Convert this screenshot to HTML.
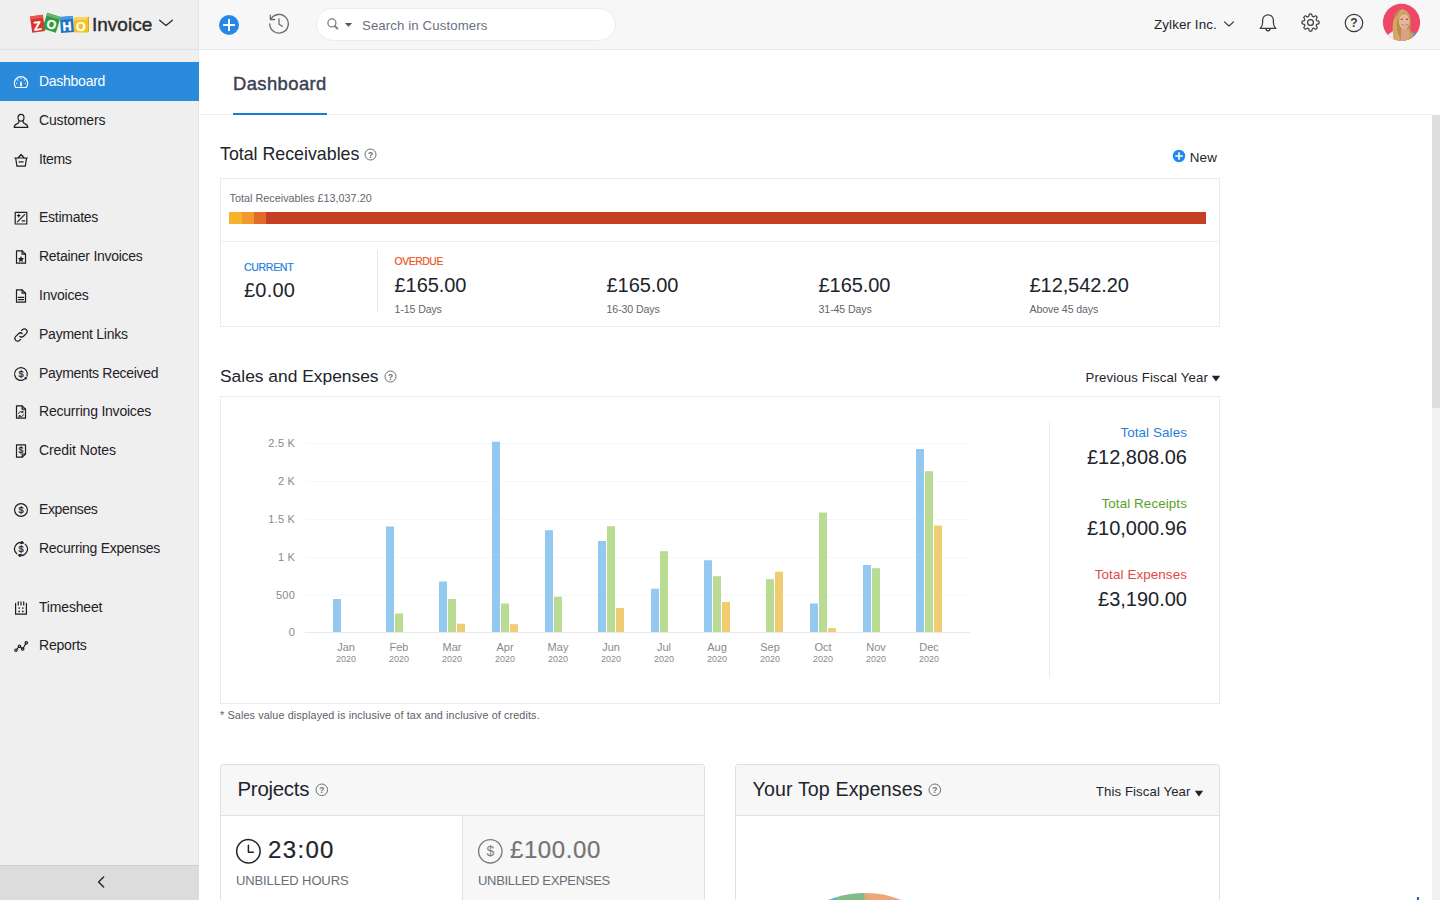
<!DOCTYPE html>
<html lang="en">
<head>
<meta charset="utf-8">
<title>Dashboard | Zoho Invoice</title>
<style>
*{box-sizing:border-box;margin:0;padding:0}
html,body{width:1440px;height:900px;overflow:hidden;background:#fff}
body{font-family:"Liberation Sans",sans-serif;color:#21263c;position:relative;font-size:14px}
.abs{position:absolute}
.t{position:absolute;white-space:nowrap;line-height:1}
/* ---------- sidebar ---------- */
#side{position:absolute;left:0;top:0;width:199px;height:900px;background:#efefef}
#side .hd{position:absolute;left:0;top:0;width:199px;height:50px;border-bottom:1px solid #e2e2e2}
#side .ft{position:absolute;left:0;top:865px;width:199px;height:35px;background:#dcdcdc;border-top:1px solid #cfcfcf}
.nav{position:absolute;left:0;width:199px;height:39px}
.nav.on{background:#2a8adb}
.nav span{position:absolute;left:39px;top:11px;font-size:14px;line-height:16px;color:#1f2227;white-space:nowrap;letter-spacing:-.27px}
.nav.on span{color:#fff}
.nav svg{position:absolute;left:13px;top:11.9px;width:16px;height:16px;fill:none;stroke:#1c1e22;stroke-width:1.2;stroke-linecap:round;stroke-linejoin:round}
.nav.on svg{stroke:#fff}
/* ---------- topbar ---------- */
#top{position:absolute;left:199px;top:0;width:1241px;height:50px;background:#f7f7f7;border-bottom:1px solid #e6e6e6}
#side{border-right:1px solid #e4e4e4}
/* ---------- main ---------- */
#main{position:absolute;left:200px;top:50px;width:1240px;height:850px;background:#fff;overflow:hidden}
.card{position:absolute;border:1px solid #ebebeb;background:#fff}
.h2{font-size:17.6px;color:#21242c}
.grey{color:#6b6f78}
</style>
</head>
<body>
<!-- SIDEBAR -->
<div id="side">
  <div class="hd">
    <svg class="abs" style="left:28px;top:10.300px" width="64" height="26" viewBox="0 0 64 26">
      <g transform="rotate(-8 9.5 13.5)"><rect x="3" y="5.5" width="13" height="16.5" fill="#d8362c"/><rect x="3" y="5.5" width="13" height="3" fill="#e6574e"/></g>
      <g transform="rotate(17 23.5 13)"><rect x="16.5" y="4.5" width="14" height="16.5" fill="#2f9a41"/><rect x="16.5" y="4.5" width="14" height="3" fill="#63b76f"/></g>
      <g transform="rotate(-4 39 14.5)"><rect x="32.5" y="6.5" width="13" height="16" fill="#1f73c4"/><rect x="32.5" y="6.5" width="13" height="3" fill="#4d97dc"/></g>
      <g><rect x="46" y="7.5" width="13.5" height="15" fill="#f8c21c"/><rect x="46" y="7.5" width="13.5" height="2.6" fill="#fbd455"/><polygon points="59.5,7.5 61,6.5 61,21.5 59.5,22.5" fill="#e0a610"/></g>
      <g font-family="Liberation Sans, sans-serif" font-weight="700" font-size="12.600" fill="#fff" text-anchor="middle" stroke="#fff" stroke-width=".25">
        <text x="9.400" y="20.300" transform="rotate(-8 9.400 15)">Z</text>
        <text x="23.600" y="18.800" transform="rotate(17 23.600 14)">O</text>
        <text x="39" y="20.700" transform="rotate(-4 39 16)">H</text>
        <text x="52.800" y="20.900">O</text>
      </g>
    </svg>
    <div class="t" style="left:92px;top:14.9px;font-size:19px;color:#2b2b2b;-webkit-text-stroke:.4px #2b2b2b;letter-spacing:0">Invoice</div>
    <svg class="abs" style="left:158px;top:17px" width="16" height="10" viewBox="0 0 16 10"><path d="M1.600 3.200 L8 8.400 L14.400 3.200" fill="none" stroke="#2b2b2b" stroke-width="1.300" stroke-linecap="round" stroke-linejoin="round"/></svg>
  </div>
  <div class="nav on" style="top:62px"><svg viewBox="0 0 16 16"><path d="M2.700 13.500A6.700 6.700 0 1 1 13.300 13.500Z"/><path d="M8 8.300v3.400" stroke-width="1.700"/><path d="M8 4.600v.01M4.700 6v.01M11.300 6v.01M3.500 9.300v.01M12.500 9.300v.01" stroke-width="1.300"/></svg><span style="letter-spacing:-0.27px">Dashboard</span></div>
  <div class="nav" style="top:101px"><svg viewBox="0 0 16 16"><ellipse cx="8" cy="4.700" rx="3" ry="3.400"/><path d="M5.900 7.500v1.200c0 1-.6 1.500-1.600 1.900-1.900.7-3 1.400-3.100 3.700h13.600c-.1-2.300-1.200-3-3.100-3.700-1-.4-1.600-.9-1.600-1.900V7.500"/></svg><span style="letter-spacing:-0.15px">Customers</span></div>
  <div class="nav" style="top:140px"><svg viewBox="0 0 16 16"><path d="M1.800 6h12.600M2.700 6l1.200 8.100h8.400L13.500 6M5 6l3.100-3.500L11.200 6M6.100 9.900h4"/></svg><span style="letter-spacing:-0.34px">Items</span></div>
  <div class="nav" style="top:198px"><svg viewBox="0 0 16 16"><rect x="2.200" y="2.400" width="11.600" height="11.600"/><path d="M4.400 11.800l7.200-7.200M4.400 5.600h2.600M5.700 4.300v2.600M9.200 10.800h2.600"/></svg><span style="letter-spacing:-0.27px">Estimates</span></div>
  <div class="nav" style="top:237px"><svg viewBox="0 0 16 16"><path d="M3.500 1.800h5.600l3.400 3.400v9H3.500z"/><path d="M9.100 1.800v3.400h3.400"/><path d="M8 6.900l1 2 2.200.3-1.600 1.500.4 2.200L8 11.900l-2 1 .4-2.200-1.600-1.500L7 8.900z" fill="#22252b" stroke="none"/></svg><span style="letter-spacing:-0.27px">Retainer Invoices</span></div>
  <div class="nav" style="top:276px"><svg viewBox="0 0 16 16"><path d="M3.500 1.800h5.600l3.400 3.400v9H3.500z"/><path d="M9.100 1.800v3.400h3.400M5.400 9.400h5.200M5.400 11.600h5.200"/></svg><span style="letter-spacing:-0.23px">Invoices</span></div>
  <div class="nav" style="top:315px"><svg viewBox="0 0 16 16"><path d="M6.700 9.300a2.700 2.700 0 0 0 3.800 0l3-3a2.700 2.700 0 0 0-3.800-3.800l-1.200 1.200"/><path d="M9.300 6.700a2.700 2.700 0 0 0-3.800 0l-3 3a2.700 2.700 0 0 0 3.800 3.800l1.200-1.200"/></svg><span style="letter-spacing:-0.23px">Payment Links</span></div>
  <div class="nav" style="top:354px"><svg viewBox="0 0 16 16"><path d="M11.200 13.540A6.400 6.400 0 1 1 14 10.190"/><circle cx="12.700" cy="12.300" r="1.250" fill="#1c1e22" stroke="none"/><text x="8" y="11.1" font-size="9.2" font-family="Liberation Sans,sans-serif" text-anchor="middle" fill="#1c1e22" stroke="#1c1e22" stroke-width=".25">$</text></svg><span style="letter-spacing:-0.31px">Payments Received</span></div>
  <div class="nav" style="top:392px"><svg viewBox="0 0 16 16"><path d="M3.500 1.800h5.600l3.400 3.400v9H3.500z"/><path d="M9.100 1.800v3.400h3.400"/><path d="M5.600 9.600a2.500 2.500 0 0 1 4.300-1.300M10.400 10.600a2.500 2.500 0 0 1-4.300 1.300M10 6.900v1.500H8.500M6 13.300v-1.500h1.500" stroke-width=".9"/></svg><span style="letter-spacing:-0.22px">Recurring Invoices</span></div>
  <div class="nav" style="top:431px"><svg viewBox="0 0 16 16"><path d="M3.500 1.800h9v9.200l-3.200 3.200H3.500z"/><path d="M12.500 11h-3.200v3.200"/><text x="8" y="10.4" font-size="8.6" font-family="Liberation Sans,sans-serif" text-anchor="middle" fill="#1c1e22" stroke="#1c1e22" stroke-width=".25">$</text></svg><span style="letter-spacing:-0.08px">Credit Notes</span></div>
  <div class="nav" style="top:490px"><svg viewBox="0 0 16 16"><circle cx="8" cy="8" r="6.400"/><text x="8" y="11.1" font-size="9.2" font-family="Liberation Sans,sans-serif" text-anchor="middle" fill="#1c1e22" stroke="#1c1e22" stroke-width=".25">$</text></svg><span style="letter-spacing:-0.38px">Expenses</span></div>
  <div class="nav" style="top:529px"><svg viewBox="0 0 16 16"><path d="M12.110 3.100A6.400 6.400 0 0 1 5.810 14.010M3.890 12.900A6.400 6.400 0 0 1 10.190 1.990"/><path d="M8.810 .2L10.190 1.990L7.870 2.610M7.190 15.800L5.810 14.010L8.130 13.390"/><text x="8" y="11.1" font-size="9.2" font-family="Liberation Sans,sans-serif" text-anchor="middle" fill="#1c1e22" stroke="#1c1e22" stroke-width=".25">$</text></svg><span style="letter-spacing:-0.29px">Recurring Expenses</span></div>
  <div class="nav" style="top:588px"><svg viewBox="0 0 16 16"><path d="M2.600 3.400v10.800h10.800V3.400M5.300 1.800v3.200M10.700 1.800v3.200M8 1.800v3.200"/><path d="M6.200 8v.01M9.800 8v.01M6.200 11.400v.01M9.800 11.400v.01" stroke-width="1.700"/></svg><span style="letter-spacing:-0.17px">Timesheet</span></div>
  <div class="nav" style="top:626px"><svg viewBox="0 0 16 16"><circle cx="2.900" cy="12.200" r="1.200"/><circle cx="6.500" cy="8.200" r="1.200"/><circle cx="9.700" cy="11" r="1.200"/><circle cx="13.300" cy="4.800" r="1.200"/><path d="M3.700 11.300l2-2.200M7.400 9l1.400 1.200M10.300 10l2.400-4.200"/></svg><span style="letter-spacing:-0.20px">Reports</span></div>
  <div class="ft"><svg class="abs" style="left:94.600px;top:8px" width="12" height="16" viewBox="0 0 12 16"><path d="M8.600 3 L3.600 8 L8.600 13" fill="none" stroke="#2a2a2a" stroke-width="1.500" stroke-linecap="round" stroke-linejoin="round"/></svg></div>
</div>
<!-- TOPBAR -->
<div id="top">
  <!-- coordinates inside #top are page-x minus 199 -->
  <svg class="abs" style="left:19px;top:13.7px" width="22" height="22" viewBox="0 0 22 22"><circle cx="11" cy="11" r="10" fill="#2488e4"/><path d="M11 5.800v10.400M5.800 11h10.400" stroke="#fff" stroke-width="1.900" stroke-linecap="round"/></svg>
  <svg class="abs" style="left:68px;top:11.9px" width="24" height="24" viewBox="0 0 24 24" fill="none" stroke="#6a6a6a" stroke-width="1.300" stroke-linecap="round" stroke-linejoin="round"><path d="M3.900 7.200A9.300 9.300 0 1 1 2.700 12"/><path d="M3.300 3.200v4.300h4.300"/><path d="M12 6.800v5.400l3.400 2"/></svg>
  <div class="abs" style="left:117px;top:8px;width:300px;height:33px;border:1px solid #ececec;border-radius:17px;background:#fff"></div>
  <svg class="abs" style="left:127px;top:17px" width="14" height="14" viewBox="0 0 14 14" fill="none" stroke="#7b7b7b" stroke-width="1.250" stroke-linecap="round"><circle cx="5.900" cy="5.900" r="4"/><path d="M9 9.100l2.400 2.500" stroke-width="1.900"/></svg>
  <svg class="abs" style="left:145px;top:22px" width="9" height="6" viewBox="0 0 9 6"><path d="M.8 1h7.400L4.500 4.800z" fill="#555"/></svg>
  <div class="t" style="left:163px;top:18.700px;font-size:13.200px;color:#6a6f7f;letter-spacing:.12px">Search in Customers</div>
  <div class="t" style="left:955px;top:17.800px;font-size:13.400px;color:#22252c;letter-spacing:.1px">Zylker Inc.</div>
  <svg class="abs" style="left:1024px;top:20px" width="12" height="8" viewBox="0 0 12 8"><path d="M1.400 1.800L6 6l4.600-4.200" fill="none" stroke="#333" stroke-width="1.100" stroke-linecap="round" stroke-linejoin="round"/></svg>
  <!-- bell -->
  <svg class="abs" style="left:1058px;top:12px" width="22" height="22" viewBox="0 0 22 22" fill="none" stroke="#3a3a3a" stroke-width="1.250" stroke-linecap="round" stroke-linejoin="round"><path d="M3.200 16.300c1.700-1.300 2.400-2.900 2.400-5.600V8.200a5.400 5.400 0 0 1 10.800 0v2.500c0 2.700.7 4.300 2.400 5.600z"/><path d="M9 16.800a2 2 0 0 0 4 0"/></svg>
  <!-- gear -->
  <svg class="abs" style="left:1102.300px;top:13.400px" width="19" height="19" viewBox="0 0 24 24" fill="none" stroke="#3a3a3a" stroke-width="1.550" stroke-linecap="round" stroke-linejoin="round"><circle cx="12" cy="12" r="3.700"/><path d="M19.400 15a1.650 1.650 0 0 0 .33 1.820l.06.06a2 2 0 1 1-2.830 2.830l-.06-.06a1.650 1.650 0 0 0-1.820-.33 1.650 1.650 0 0 0-1 1.510V21a2 2 0 0 1-4 0v-.09A1.650 1.650 0 0 0 9 19.400a1.650 1.650 0 0 0-1.820.33l-.06.06a2 2 0 1 1-2.830-2.830l.06-.06a1.650 1.650 0 0 0 .33-1.820 1.650 1.650 0 0 0-1.510-1H3a2 2 0 0 1 0-4h.09A1.650 1.650 0 0 0 4.600 9a1.650 1.650 0 0 0-.33-1.820l-.06-.06a2 2 0 1 1 2.830-2.830l.06.06a1.650 1.650 0 0 0 1.820.33H9a1.650 1.650 0 0 0 1-1.510V3a2 2 0 0 1 4 0v.09a1.650 1.650 0 0 0 1 1.510 1.650 1.650 0 0 0 1.820-.33l.06-.06a2 2 0 1 1 2.830 2.830l-.06.06a1.650 1.650 0 0 0-.33 1.820V9a1.650 1.650 0 0 0 1.510 1H21a2 2 0 0 1 0 4h-.09a1.650 1.650 0 0 0-1.510 1z"/></svg>
  <!-- help -->
  <svg class="abs" style="left:1144px;top:12px" width="22" height="22" viewBox="0 0 22 22"><circle cx="11" cy="11" r="8.700" fill="none" stroke="#3a3a3a" stroke-width="1.200"/><text x="11" y="15.300" font-family="Liberation Sans,sans-serif" font-size="12" font-weight="700" fill="#3a3a3a" text-anchor="middle">?</text></svg>
  <!-- avatar -->
  <svg class="abs" style="left:1183px;top:3px" width="40" height="40" viewBox="0 0 40 40">
    <defs><clipPath id="av"><circle cx="19.500" cy="19.400" r="18.600"/></clipPath></defs>
    <circle cx="19.500" cy="19.400" r="18.600" fill="#ee4866"/>
    <g clip-path="url(#av)">
      <path d="M3 34L11.500 27.500L20 32L21 40L3 40Z" fill="#f5f0ed"/>
      <path d="M29.500 28.500L34.500 31L33.500 36L29 34.500Z" fill="#5e9fd6"/>
      <path d="M20 6.200C16 6.500 13.500 9.500 12.300 13.500C11 18 10.300 22 10.600 26C10.800 30 11.500 34 12.500 40L30 40C30.500 36.500 31.500 33.500 31 31.500C29.500 29.500 28.300 27.500 28.600 25C29.300 21 29.200 17 28 13.500C26.800 9.500 24 6.500 20 6.200Z" fill="#bf8b52"/>
      <path d="M19 26L27 26L28.500 40L19 40Z" fill="#d9a283"/>
      <ellipse cx="22.200" cy="18.600" rx="5.400" ry="7.800" fill="#e7b799"/>
      <path d="M20 6.200C17 8 15.500 11.500 15.800 16.800C17.500 13.500 19.500 10.800 22.500 9.300C24.500 10.200 26.500 12.500 27.600 15.800C28 11.500 25 7 20 6.200Z" fill="#d6a867"/>
      <path d="M16.300 12C14.500 18 14.200 25 15.500 29C16.500 32 18.500 35 19.500 40L12.500 40C11.500 34 10.500 28 11 22C11.300 18 13 13.500 16.300 12Z" fill="#d6a867"/>
      <path d="M27.800 24C27.500 27 28.500 29.500 30.500 31.500C31 33.500 30 36.500 29.500 40L25.500 40C27 36 27.500 31 26.500 27Z" fill="#cf9d5e"/>
      <path d="M18.700 16.300h2.100M23.900 16.300h2.100" stroke="#6a4630" stroke-width="1"/>
      <path d="M19.600 21.100C21.500 22.200 24 22.200 25.800 20.900C25.200 23.700 20.600 24 19.600 21.100Z" fill="#7a3b38"/>
      <path d="M20.300 21.500C21.800 22.100 23.800 22.100 25.200 21.400L24.900 22.300C23.500 22.900 21.800 22.900 20.600 22.300Z" fill="#fff"/>
    </g>
  </svg>
</div>
<!-- MAIN -->
<div id="main">
  <!-- coordinates inside #main: x = page-x - 200, y = page-y - 50 -->
  <div class="t" style="left:33px;top:25px;font-size:18.400px;color:#3b4252;-webkit-text-stroke:.45px #3b4252;letter-spacing:.42px">Dashboard</div>
  <div class="abs" style="left:0;top:64px;width:1232px;height:1px;background:#ececec"></div>
  <div class="abs" style="left:33px;top:63px;width:94px;height:2px;background:#1b7ad8"></div>
  <!-- scrollbar -->
  <div class="abs" style="left:1232px;top:65px;width:8px;height:785px;background:#f2f2f2"></div>
  <div class="abs" style="left:1232px;top:65px;width:8px;height:293px;background:#dfdfdf"></div>
  <div class="abs" style="left:1217px;top:847px;width:2px;height:3px;background:#1565c0"></div>
  <div class="t h2" style="left:20px;top:96px;font-size:17.800px">Total Receivables</div>
  <svg class="abs" style="left:163.5px;top:97.5px" width="13.0" height="13.0" viewBox="0 0 13.0 13.0"><circle cx="6.5" cy="6.5" r="5.5" fill="none" stroke="#6a6a6a" stroke-width="1"/><text x="6.5" y="9.500" font-family="Liberation Sans,sans-serif" font-size="8.400" font-weight="700" fill="#6a6a6a" text-anchor="middle">?</text></svg>
  <svg class="abs" style="left:971.700px;top:99px" width="14" height="14" viewBox="0 0 14 14"><circle cx="7" cy="7" r="6.200" fill="#1f87f0"/><path d="M7 3.800v6.400M3.800 7h6.400" stroke="#fff" stroke-width="1.600" stroke-linecap="round"/></svg>
  <div class="t" style="left:989.700px;top:100.500px;font-size:13.400px;color:#22252c;letter-spacing:.2px">New</div>
  <div class="card" style="left:20px;top:128px;width:1000px;height:149px"></div>
  <div class="t" style="left:29.500px;top:143px;font-size:10.800px;color:#63666e;letter-spacing:.02px">Total Receivables £13,037.20</div>
  <div class="abs" style="left:29px;top:162px;width:977px;height:12px;background:#c63f23"></div>
  <div class="abs" style="left:29px;top:162px;width:13px;height:12px;background:#f6b42c"></div>
  <div class="abs" style="left:42px;top:162px;width:12px;height:12px;background:#f2982c"></div>
  <div class="abs" style="left:54px;top:162px;width:12px;height:12px;background:#e26a2a"></div>
  <div class="abs" style="left:21px;top:191px;width:998px;height:1px;background:#ececec"></div>
  <div class="abs" style="left:177px;top:200px;width:1px;height:62px;background:#e6e6e6"></div>
  <div class="t" style="left:44px;top:212px;font-size:10.600px;letter-spacing:-.36px;color:#1f7fe0;-webkit-text-stroke:.2px #1f7fe0">CURRENT</div>
  <div class="t" style="left:44px;top:229.500px;font-size:20px;letter-spacing:.2px;color:#21242c">£0.00</div>
  <div class="t" style="left:194.500px;top:207.300px;font-size:10.400px;letter-spacing:-.42px;color:#e8581c;-webkit-text-stroke:.2px #e8581c">OVERDUE</div>
  <div class="t" style="left:194.6px;top:224.500px;font-size:20px;letter-spacing:-.1px;color:#21242c">£165.00</div>
  <div class="t" style="left:194.6px;top:254.300px;font-size:10.600px;color:#63666e;letter-spacing:-.12px">1-15 Days</div>
  <div class="t" style="left:406.6px;top:224.500px;font-size:20px;letter-spacing:-.1px;color:#21242c">£165.00</div>
  <div class="t" style="left:406.6px;top:254.300px;font-size:10.600px;color:#63666e;letter-spacing:-.12px">16-30 Days</div>
  <div class="t" style="left:618.6px;top:224.500px;font-size:20px;letter-spacing:-.1px;color:#21242c">£165.00</div>
  <div class="t" style="left:618.6px;top:254.300px;font-size:10.600px;color:#63666e;letter-spacing:-.12px">31-45 Days</div>
  <div class="t" style="left:829.6px;top:224.500px;font-size:20px;letter-spacing:-.1px;color:#21242c">£12,542.20</div>
  <div class="t" style="left:829.6px;top:254.300px;font-size:10.600px;color:#63666e;letter-spacing:-.12px">Above 45 days</div>
  <div class="t h2" style="left:20px;top:317.500px;font-size:17.400px">Sales and Expenses</div>
  <svg class="abs" style="left:184.0px;top:319.5px" width="13.0" height="13.0" viewBox="0 0 13.0 13.0"><circle cx="6.5" cy="6.5" r="5.5" fill="none" stroke="#6a6a6a" stroke-width="1"/><text x="6.5" y="9.500" font-family="Liberation Sans,sans-serif" font-size="8.400" font-weight="700" fill="#6a6a6a" text-anchor="middle">?</text></svg>
  <div class="t" style="right:232px;top:320.500px;font-size:13.200px;color:#22252c;letter-spacing:.15px">Previous Fiscal Year</div>
  <svg class="abs" style="left:1011px;top:325px" width="10" height="7" viewBox="0 0 10 7"><path d="M.8.800h8.400L5 6.400z" fill="#222"/></svg>
  <div class="card" style="left:20px;top:346px;width:1000px;height:308px"></div>
  <div class="abs" style="left:849px;top:372px;width:1px;height:256px;background:#ebebeb"></div>
  <svg class="abs" style="left:21px;top:347px" width="820" height="300" viewBox="0 0 820 300" font-family="Liberation Sans,sans-serif"><rect x="84" y="46.0" width="665.500" height="1" fill="#f7f7f7"/><text x="74" y="50.3" font-size="11" fill="#8a8a8a" text-anchor="end" letter-spacing=".2">2.5 K</text><rect x="84" y="84.0" width="665.500" height="1" fill="#f7f7f7"/><text x="74" y="88.3" font-size="11" fill="#8a8a8a" text-anchor="end" letter-spacing=".2">2 K</text><rect x="84" y="122.0" width="665.500" height="1" fill="#f7f7f7"/><text x="74" y="126.3" font-size="11" fill="#8a8a8a" text-anchor="end" letter-spacing=".2">1.5 K</text><rect x="84" y="160.0" width="665.500" height="1" fill="#f7f7f7"/><text x="74" y="164.3" font-size="11" fill="#8a8a8a" text-anchor="end" letter-spacing=".2">1 K</text><rect x="84" y="197.7" width="665.500" height="1" fill="#f7f7f7"/><text x="74" y="202.0" font-size="11" fill="#8a8a8a" text-anchor="end" letter-spacing=".2">500</text><rect x="84" y="235.0" width="665.500" height="1" fill="#e9e9e9"/><text x="74" y="239.3" font-size="11" fill="#8a8a8a" text-anchor="end" letter-spacing=".2">0</text><rect x="112" y="202.0" width="8" height="33.0" fill="#94c9ef"/><text x="125" y="253.600" font-size="11" fill="#8a8a8a" text-anchor="middle">Jan</text><text x="125" y="265.100" font-size="9" fill="#8a8a8a" text-anchor="middle">2020</text><rect x="165" y="129.5" width="8" height="105.5" fill="#94c9ef"/><rect x="174" y="216.5" width="8" height="18.5" fill="#b9db94"/><text x="178" y="253.600" font-size="11" fill="#8a8a8a" text-anchor="middle">Feb</text><text x="178" y="265.100" font-size="9" fill="#8a8a8a" text-anchor="middle">2020</text><rect x="218" y="184.5" width="8" height="50.5" fill="#94c9ef"/><rect x="227" y="202.0" width="8" height="33.0" fill="#b9db94"/><rect x="236" y="226.7" width="8" height="8.3" fill="#f0cd72"/><text x="231" y="253.600" font-size="11" fill="#8a8a8a" text-anchor="middle">Mar</text><text x="231" y="265.100" font-size="9" fill="#8a8a8a" text-anchor="middle">2020</text><rect x="271" y="44.7" width="8" height="190.3" fill="#94c9ef"/><rect x="280" y="206.5" width="8" height="28.5" fill="#b9db94"/><rect x="289" y="227.2" width="8" height="7.8" fill="#f0cd72"/><text x="284" y="253.600" font-size="11" fill="#8a8a8a" text-anchor="middle">Apr</text><text x="284" y="265.100" font-size="9" fill="#8a8a8a" text-anchor="middle">2020</text><rect x="324" y="133.2" width="8" height="101.8" fill="#94c9ef"/><rect x="333" y="199.7" width="8" height="35.3" fill="#b9db94"/><text x="337" y="253.600" font-size="11" fill="#8a8a8a" text-anchor="middle">May</text><text x="337" y="265.100" font-size="9" fill="#8a8a8a" text-anchor="middle">2020</text><rect x="377" y="144.0" width="8" height="91.0" fill="#94c9ef"/><rect x="386" y="129.2" width="8" height="105.8" fill="#b9db94"/><rect x="395" y="211.0" width="8" height="24.0" fill="#f0cd72"/><text x="390" y="253.600" font-size="11" fill="#8a8a8a" text-anchor="middle">Jun</text><text x="390" y="265.100" font-size="9" fill="#8a8a8a" text-anchor="middle">2020</text><rect x="430" y="191.7" width="8" height="43.3" fill="#94c9ef"/><rect x="439" y="154.2" width="8" height="80.8" fill="#b9db94"/><text x="443" y="253.600" font-size="11" fill="#8a8a8a" text-anchor="middle">Jul</text><text x="443" y="265.100" font-size="9" fill="#8a8a8a" text-anchor="middle">2020</text><rect x="483" y="163.2" width="8" height="71.8" fill="#94c9ef"/><rect x="492" y="179.2" width="8" height="55.8" fill="#b9db94"/><rect x="501" y="205.0" width="8" height="30.0" fill="#f0cd72"/><text x="496" y="253.600" font-size="11" fill="#8a8a8a" text-anchor="middle">Aug</text><text x="496" y="265.100" font-size="9" fill="#8a8a8a" text-anchor="middle">2020</text><rect x="545" y="182.2" width="8" height="52.8" fill="#b9db94"/><rect x="554" y="174.7" width="8" height="60.3" fill="#f0cd72"/><text x="549" y="253.600" font-size="11" fill="#8a8a8a" text-anchor="middle">Sep</text><text x="549" y="265.100" font-size="9" fill="#8a8a8a" text-anchor="middle">2020</text><rect x="589" y="206.5" width="8" height="28.5" fill="#94c9ef"/><rect x="598" y="115.5" width="8" height="119.5" fill="#b9db94"/><rect x="607" y="231.2" width="8" height="3.8" fill="#f0cd72"/><text x="602" y="253.600" font-size="11" fill="#8a8a8a" text-anchor="middle">Oct</text><text x="602" y="265.100" font-size="9" fill="#8a8a8a" text-anchor="middle">2020</text><rect x="642" y="168.0" width="8" height="67.0" fill="#94c9ef"/><rect x="651" y="171.2" width="8" height="63.8" fill="#b9db94"/><text x="655" y="253.600" font-size="11" fill="#8a8a8a" text-anchor="middle">Nov</text><text x="655" y="265.100" font-size="9" fill="#8a8a8a" text-anchor="middle">2020</text><rect x="695" y="52.0" width="8" height="183.0" fill="#94c9ef"/><rect x="704" y="74.2" width="8" height="160.8" fill="#b9db94"/><rect x="713" y="128.6" width="8" height="106.4" fill="#f0cd72"/><text x="708" y="253.600" font-size="11" fill="#8a8a8a" text-anchor="middle">Dec</text><text x="708" y="265.100" font-size="9" fill="#8a8a8a" text-anchor="middle">2020</text></svg>
  <div class="t" style="right:253px;top:375.8px;font-size:13.400px;color:#1f7fd8;letter-spacing:.1px">Total Sales</div>
  <div class="t" style="right:253px;top:396.5px;font-size:20px;color:#21242c">£12,808.06</div>
  <div class="t" style="right:253px;top:446.8px;font-size:13.400px;color:#5aa21f;letter-spacing:.1px">Total Receipts</div>
  <div class="t" style="right:253px;top:467.5px;font-size:20px;color:#21242c">£10,000.96</div>
  <div class="t" style="right:253px;top:517.8px;font-size:13.400px;color:#e0484a;letter-spacing:.1px">Total Expenses</div>
  <div class="t" style="right:253px;top:538.5px;font-size:20px;color:#21242c">£3,190.00</div>
  <div class="t" style="left:20px;top:660px;font-size:10.800px;color:#5d6068;letter-spacing:.12px">* Sales value displayed is inclusive of tax and inclusive of credits.</div>
  <!-- Projects card -->
  <div class="abs" style="left:20px;top:714px;width:485px;height:160px;border:1px solid #e1e1e1;border-radius:3px;background:#fff"></div>
  <div class="abs" style="left:21px;top:715px;width:483px;height:50px;background:#f7f7f7;border-radius:2px 2px 0 0"></div>
  <div class="abs" style="left:21px;top:765px;width:483px;height:1px;background:#e1e1e1"></div>
  <div class="abs" style="left:263px;top:766px;width:241px;height:90px;background:#f7f7f7"></div>
  <div class="abs" style="left:262px;top:766px;width:1px;height:90px;background:#e1e1e1"></div>
  <div class="t" style="left:37.500px;top:729px;font-size:20.400px;color:#21242c;letter-spacing:-.25px">Projects</div>
  <svg class="abs" style="left:115.2px;top:733.4px" width="13.6" height="13.6" viewBox="0 0 13.6 13.6"><circle cx="6.8" cy="6.8" r="5.8" fill="none" stroke="#6f6f6f" stroke-width="1"/><text x="6.8" y="9.9" font-family="Liberation Sans,sans-serif" font-size="8.500" font-weight="700" fill="#6f6f6f" text-anchor="middle">?</text></svg>
  <svg class="abs" style="left:35px;top:787.500px" width="27" height="27" viewBox="0 0 27 27" fill="none" stroke="#21242c" stroke-width="1.500" stroke-linecap="round" stroke-linejoin="round"><circle cx="13.400" cy="13.300" r="11.700"/><path d="M13.400 7.200v7h5"/></svg>
  <div class="t" style="left:68px;top:788px;font-size:24px;color:#21242c;letter-spacing:1.350px;-webkit-text-stroke:.2px #21242c">23:00</div>
  <div class="t" style="left:36px;top:823.500px;font-size:13px;color:#6b6e75;letter-spacing:-.12px">UNBILLED HOURS</div>
  <svg class="abs" style="left:277px;top:787.500px" width="27" height="27" viewBox="0 0 27 27"><circle cx="13.300" cy="13.300" r="11.700" fill="none" stroke="#7a7a7a" stroke-width="1.300"/><text x="13.300" y="18.300" font-family="Liberation Sans,sans-serif" font-size="14" fill="#7a7a7a" text-anchor="middle">$</text></svg>
  <div class="t" style="left:310px;top:788px;font-size:24px;color:#747474;letter-spacing:.58px;-webkit-text-stroke:.2px #747474">£100.00</div>
  <div class="t" style="left:278px;top:823.500px;font-size:13px;color:#6b6e75;letter-spacing:-.32px">UNBILLED EXPENSES</div>
  <!-- Top expenses card -->
  <div class="abs" style="left:535px;top:714px;width:485px;height:160px;border:1px solid #e1e1e1;border-radius:3px;background:#fff"></div>
  <div class="abs" style="left:536px;top:715px;width:483px;height:50px;background:#f7f7f7;border-radius:2px 2px 0 0"></div>
  <div class="abs" style="left:536px;top:765px;width:483px;height:1px;background:#e1e1e1"></div>
  <div class="t" style="left:552.500px;top:730px;font-size:19.600px;color:#21242c;letter-spacing:.14px">Your Top Expenses</div>
  <svg class="abs" style="left:728.1px;top:733.4px" width="13.6" height="13.6" viewBox="0 0 13.6 13.6"><circle cx="6.8" cy="6.8" r="5.8" fill="none" stroke="#6f6f6f" stroke-width="1"/><text x="6.8" y="9.9" font-family="Liberation Sans,sans-serif" font-size="8.500" font-weight="700" fill="#6f6f6f" text-anchor="middle">?</text></svg>
  <div class="t" style="right:249.500px;top:734.500px;font-size:13.200px;color:#22252c;letter-spacing:.1px">This Fiscal Year</div>
  <svg class="abs" style="left:994px;top:739.500px" width="10" height="7" viewBox="0 0 10 7"><path d="M.800.800h8.400L5 6.400z" fill="#222"/></svg>
  <svg class="abs" style="left:0;top:0" width="1232" height="850" viewBox="0 0 1232 850"><path d="M664.9 943.0L664.9 843.0A100 100 0 0 1 751.5 993.0Z" fill="#eaa878"/><path d="M664.9 943.0L636.8 847.0A100 100 0 0 1 664.9 843.0Z" fill="#80bc88"/><path d="M664.9 943.0L578.3 893.0A100 100 0 0 1 636.8 847.0Z" fill="#5fb0d8"/><path d="M664.9 943.0L751.5 993.0A100 100 0 0 1 578.3 893.0Z" fill="#c9c9c9"/></svg>

</div>
</body>
</html>
